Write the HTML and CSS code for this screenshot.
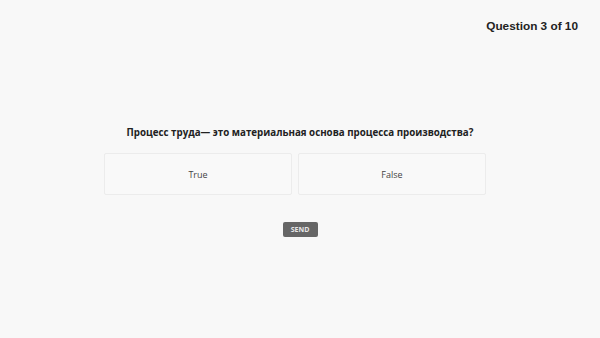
FILE: index.html
```html
<!DOCTYPE html>
<html lang="ru">
<head>
  <meta charset="UTF-8">
  <title>Quiz</title>
  <link rel="stylesheet" href="styles.css">
</head>
<body>
  <header class="top">
    <span class="counter">Question 3 of 10</span>
  </header>
  <main class="quiz">
    <h2 class="question">Процесс труда— это материальная основа процесса производства?</h2>
    <div class="options">
      <button class="option">True</button>
      <button class="option">False</button>
    </div>
    <button class="send-btn">SEND</button>
  </main>
</body>
</html>
```

FILE: styles.css
```css
* {
  margin: 0;
  padding: 0;
  box-sizing: border-box;
}
html, body {
  height: 100%;
}
body {
  background: #f8f8f8;
  font-family: "Open Sans", sans-serif;
  color: #333;
}

/* ===== Header ===== */
.top {
  display: flex;
  justify-content: flex-end;
  padding: 19px 22px 0 0;
}
.counter {
  font-family: "Liberation Sans", Arial, sans-serif;
  font-weight: bold;
  font-size: 11.8px;
  color: #222;
}

/* ===== Quiz ===== */
.quiz {
  display: flex;
  flex-direction: column;
  align-items: center;
  padding-top: 93px;
}
.question {
  font-size: 9.75px;
  font-weight: 700;
  color: #222;
  margin-bottom: 14px;
}
.options {
  display: flex;
  gap: 6px;
  margin-right: 10px;
}
.option {
  width: 188px;
  height: 42px;
  background: #f9f9f9;
  border: 1px solid #ececec;
  border-radius: 2px;
  font-family: "Open Sans", sans-serif;
  font-size: 9px;
  color: #444;
}
.send-btn {
  margin-top: 27px;
  width: 35px;
  height: 15px;
  background: #666;
  color: #e8e8e8;
  border: none;
  border-radius: 2px;
  font-family: "Open Sans", sans-serif;
  font-size: 7px;
  font-weight: 700;
}
```
